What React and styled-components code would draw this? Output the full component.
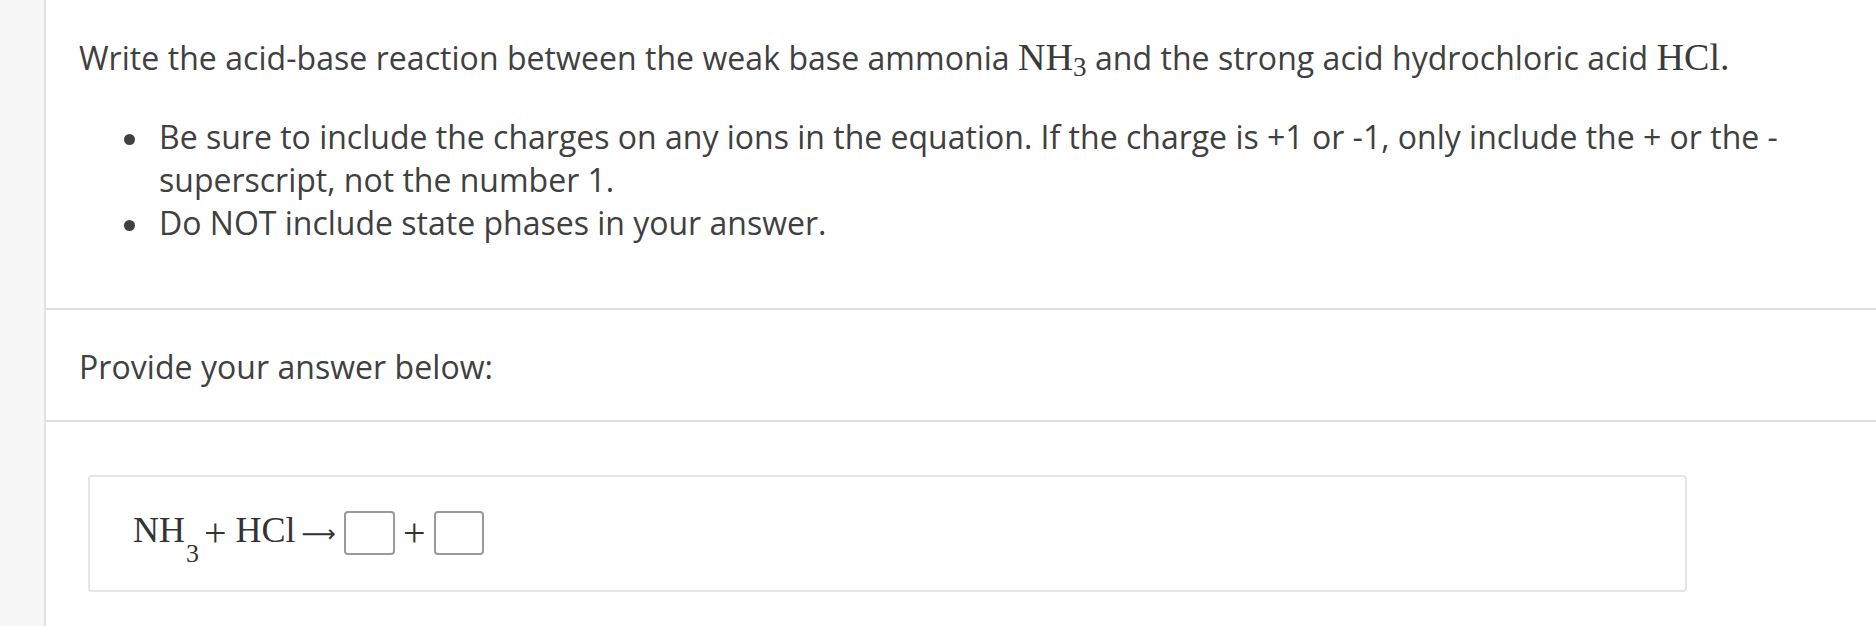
import React from "react";
import styled, { createGlobalStyle } from "styled-components";

const GlobalStyle = createGlobalStyle`
	html, body {
		margin: 0;
		padding: 0;
		background: #ffffff;
	}
	body {
		font-family: "Open Sans", "Liberation Sans", sans-serif;
		color: #404040;
	}
`;

//============
// page frame
//============
const Page = styled.div`
	display: flex;
	width: 1876px;
	height: 626px;
	overflow: hidden;
`;

const SideStrip = styled.div`
	flex: 0 0 44px;
	background: #f7f7f7;
	border-right: 2px solid #e1e1e1;
`;

const Main = styled.div`
	flex: 1;
	display: flex;
	flex-direction: column;
`;

//============
// sections
//============
const Section = styled.section`
	padding: ${(p) => p.$pad};
	border-bottom: ${(p) => (p.$divider ? "2px solid #dddddd" : "none")};
	flex: ${(p) => (p.$grow ? 1 : "none")};
	box-sizing: border-box;
	height: ${(p) => p.$height || "auto"};
`;

const Prompt = styled.p`
	margin: 0;
	font-size: 32px;
	line-height: 44px;
	letter-spacing: 0.05px;
`;

const Chem = styled.span`
	font-family: "Liberation Serif", "Times New Roman", serif;
	font-size: 38px;
	color: #3a3a3a;

	sub {
		font-size: 27px;
		vertical-align: -6px;
		line-height: 0;
	}
`;

const BulletList = styled.ul`
	list-style: none;
	margin: 35px 0 0 45px;
	padding: 0;
	font-size: 32px;
	line-height: 43px;
`;

const Bullet = styled.li`
	display: flex;

	&::before {
		content: "";
		flex: 0 0 11px;
		height: 11px;
		margin: 19px 24px 0 0;
		border-radius: 50%;
		background: #404040;
	}
`;

//============
// answer area
//============
const AnswerBox = styled.div`
	width: 1599px;
	height: 117px;
	box-sizing: border-box;
	border: 2px solid #e6e6e6;
	border-radius: 4px;
	padding: 31px 0 0 43px;
`;

const Equation = styled.div`
	font-family: "Liberation Serif", "Times New Roman", serif;
	font-size: 36px;
	line-height: 44px;
	color: #333;
	white-space: nowrap;
`;

const Sub = styled.span`
	font-size: 26px;
	vertical-align: -20px;
	line-height: 0;
	margin-left: 1px;
`;

const Op = styled.span`
	display: inline-block;
	margin: 0 ${(p) => p.$right || "0"} 0 ${(p) => p.$left || "0"};
	font-family: ${(p) =>
		p.$arrow ? '"DejaVu Sans", serif' : '"Liberation Serif", serif'};
	font-size: ${(p) => p.$size || "40px"};
	line-height: 0;
	vertical-align: ${(p) => p.$drop || "0"};
`;

const Blank = styled.span`
	display: inline-block;
	width: ${(p) => p.$w || "51px"};
	height: 44px;
	box-sizing: border-box;
	border: 2px solid #9a9a9a;
	border-radius: 4px;
	vertical-align: -13px;
`;

const App = () => {
	return (
		<>
			<GlobalStyle />
			<Page>
				<SideStrip />
				<Main>
					<Section $pad="35px 0 0 33px" $height="310px" $divider>
						<Prompt>
							Write the acid-base reaction between the weak base ammonia{" "}
							<Chem>
								NH<sub>3</sub>
							</Chem>{" "}
							and the strong acid hydrochloric acid <Chem>HCl.</Chem>
						</Prompt>
						<BulletList>
							<Bullet>
								<span>
									Be sure to include the charges on any ions in the
									equation. If the charge is +1 or -1, only include the +
									or the - superscript, not the number 1.
								</span>
							</Bullet>
							<Bullet>
								<span>Do NOT include state phases in your answer.</span>
							</Bullet>
						</BulletList>
					</Section>
					<Section $pad="35px 0 0 33px" $height="112px" $divider>
						<Prompt>Provide your answer below:</Prompt>
					</Section>
					<Section $pad="53px 0 0 42px" $grow>
						<AnswerBox>
							<Equation>
								NH<Sub>3</Sub>
								<Op $left="5px" $right="9px" $drop="-4px">
									+
								</Op>
								HCl
								<Op $arrow $left="6px" $right="8px" $size="24px" $drop="0px">
									⟶
								</Op>
								<Blank />
								<Op $left="8px" $right="8px" $drop="-4px">
									+
								</Op>
								<Blank $w="50px" />
							</Equation>
						</AnswerBox>
					</Section>
				</Main>
			</Page>
		</>
	);
};

export default App;
